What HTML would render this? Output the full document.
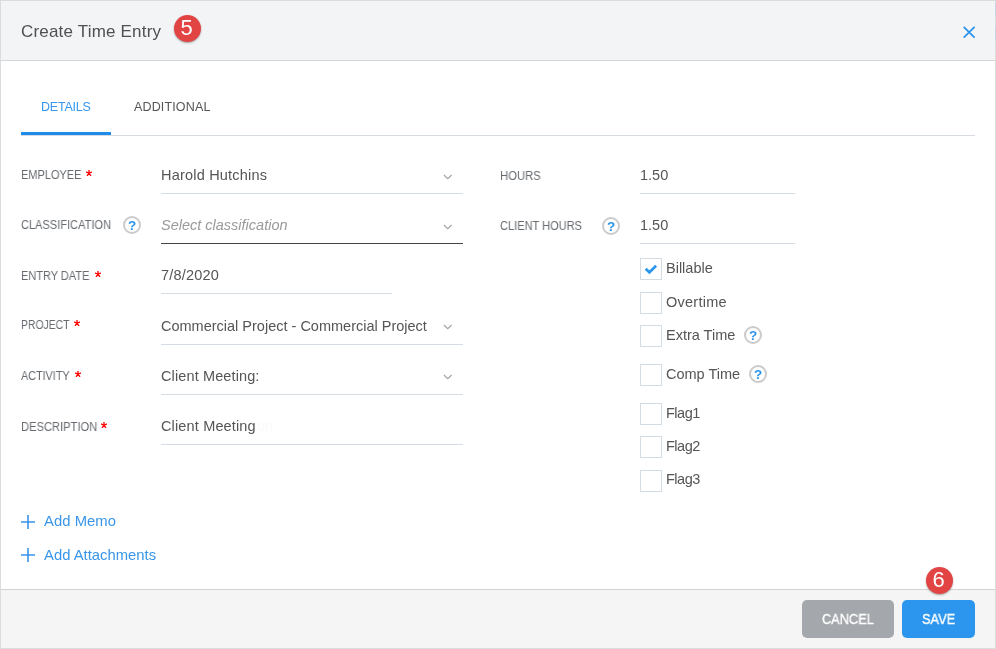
<!DOCTYPE html>
<html><head><meta charset="utf-8">
<style>
html,body{margin:0;padding:0;background:#fff;}
body{width:996px;height:649px;position:relative;overflow:hidden;font-family:"Liberation Sans",sans-serif;}
.a{position:absolute;}
.t{position:absolute;white-space:nowrap;line-height:20px;will-change:transform;}
.frame{left:0;top:0;width:994px;height:647px;border:1px solid #dcdcdc;background:#fff;}
.hdr{left:1px;top:1px;width:994px;height:59px;background:#f3f4f6;}
.hline{left:1px;top:60px;width:994px;height:1px;background:#d6d6d6;}
.ftr{left:1px;top:590px;width:994px;height:58px;background:#f5f5f5;}
.fline{left:1px;top:589px;width:994px;height:1px;background:#d3d3d3;}
.title{left:21px;top:22px;font-size:17px;color:#505050;letter-spacing:0.19px;}
.badge{width:27px;height:27px;border-radius:50%;background:#e24444;box-shadow:0 1px 2px rgba(0,0,0,.35);}
.badge span{position:absolute;left:-1px;top:0;width:27px;text-align:center;color:#fff;font-size:22px;line-height:26px;will-change:transform;}
.tab{font-size:12.5px;}
.lbl{font-size:12px;color:#676b70;transform-origin:0 0;}
.req{color:#e8141b;font-size:13px;}
.val{font-size:14.5px;color:#555;}
.ul{height:1px;background:#d5dce4;}
.chev{width:9px;height:6px;}
.cb{width:20px;height:20px;border:1px solid #d3dbe3;background:#fff;}
.cbl{font-size:14.5px;color:#555;}
.help{width:14px;height:14px;border:2px solid #cbcbcb;border-radius:50%;background:#fff;}
.help b{position:absolute;left:0;top:1px;width:14px;text-align:center;font-size:13.5px;line-height:14px;color:#2a93ec;font-weight:bold;will-change:transform;}
.link{font-size:14.8px;color:#3895e8;}
.btn{height:38px;border-radius:5px;}
.btn span{position:absolute;left:0;top:9px;white-space:nowrap;color:#fff;font-size:14px;line-height:20px;transform-origin:0 0;transform:scaleX(0.912);will-change:transform;-webkit-text-stroke:0.35px #fff;}
</style></head><body>
<div class="a frame"></div>
<div class="a hdr"></div>
<div class="a hline"></div>
<div class="a" style="left:995px;top:3px;width:1px;height:14px;background:#c9d5e2;"></div>
<div class="a" style="left:995px;top:27px;width:1px;height:14px;background:#c9d5e2;"></div>
<div class="t title">Create Time Entry</div>
<div class="a badge" style="left:173.5px;top:14.5px;"><span>5</span></div>
<svg class="a" style="left:962px;top:25px" width="14" height="14" viewBox="0 0 14 14"><path d="M2.2 2.3L12.1 12.1M12.1 2.3L2.2 12.1" stroke="#2a93ee" stroke-width="1.75" stroke-linecap="round"/></svg>

<!-- tabs -->
<div class="t tab" style="left:41px;top:97px;color:#3597ee;letter-spacing:-0.22px;">DETAILS</div>
<div class="t tab" style="left:134px;top:97px;color:#555;letter-spacing:0.15px;">ADDITIONAL</div>
<div class="a" style="left:21px;top:135px;width:954px;height:1px;background:#d5dbe1;"></div>
<div class="a" style="left:21px;top:132px;width:90px;height:3px;background:#1e8ceb;"></div>

<!-- left column -->
<div class="t lbl" style="left:21px;top:165px;transform:scaleX(0.915);">EMPLOYEE</div>
<div class="t val" style="left:161px;top:165px;letter-spacing:0.2px;">Harold Hutchins</div>
<div class="a ul" style="left:161px;top:193px;width:302px;"></div>

<div class="t lbl" style="left:21px;top:215px;transform:scaleX(0.92);">CLASSIFICATION</div>
<div class="t val" style="left:161px;top:215px;color:#9a9a9a;font-style:italic;">Select classification</div>
<div class="a" style="left:161px;top:243px;width:302px;height:1px;background:#444;"></div>

<div class="t lbl" style="left:21px;top:266px;transform:scaleX(0.915);">ENTRY DATE</div>
<div class="t val" style="left:161px;top:265px;letter-spacing:0.2px;">7/8/2020</div>
<div class="a ul" style="left:161px;top:293px;width:231px;"></div>

<div class="t lbl" style="left:21px;top:315px;transform:scaleX(0.865);">PROJECT</div>
<div class="t val" style="left:161px;top:316px;">Commercial Project - Commercial Project</div>
<div class="a ul" style="left:161px;top:344px;width:302px;"></div>

<div class="t lbl" style="left:21px;top:366px;transform:scaleX(0.9);">ACTIVITY</div>
<div class="t val" style="left:161px;top:366px;letter-spacing:0.12px;">Client Meeting:</div>
<div class="a ul" style="left:161px;top:394px;width:302px;"></div>

<div class="t lbl" style="left:21px;top:417px;transform:scaleX(0.93);">DESCRIPTION</div>
<div class="t val" style="left:161px;top:416px;letter-spacing:0.15px;">Client Meeting</div>
<div class="t val" style="left:257px;top:416px;color:#fafafa;">on</div>
<div class="a ul" style="left:161px;top:444px;width:302px;"></div>

<svg class="a" style="left:85.5px;top:169.5px" width="6" height="6" viewBox="0 0 6 6"><path d="M3 0.2V3M3 3L0.3 2.1M3 3L4.7 5.6M3 3L1.3 5.6M3 3L5.7 2.1" stroke="#f00" stroke-width="1.3" stroke-linecap="round"/></svg>
<svg class="a" style="left:95px;top:270.5px" width="6" height="6" viewBox="0 0 6 6"><path d="M3 0.2V3M3 3L0.3 2.1M3 3L4.7 5.6M3 3L1.3 5.6M3 3L5.7 2.1" stroke="#f00" stroke-width="1.3" stroke-linecap="round"/></svg>
<svg class="a" style="left:73.5px;top:319.5px" width="6" height="6" viewBox="0 0 6 6"><path d="M3 0.2V3M3 3L0.3 2.1M3 3L4.7 5.6M3 3L1.3 5.6M3 3L5.7 2.1" stroke="#f00" stroke-width="1.3" stroke-linecap="round"/></svg>
<svg class="a" style="left:74.5px;top:370.5px" width="6" height="6" viewBox="0 0 6 6"><path d="M3 0.2V3M3 3L0.3 2.1M3 3L4.7 5.6M3 3L1.3 5.6M3 3L5.7 2.1" stroke="#f00" stroke-width="1.3" stroke-linecap="round"/></svg>
<svg class="a" style="left:101px;top:421.5px" width="6" height="6" viewBox="0 0 6 6"><path d="M3 0.2V3M3 3L0.3 2.1M3 3L4.7 5.6M3 3L1.3 5.6M3 3L5.7 2.1" stroke="#f00" stroke-width="1.3" stroke-linecap="round"/></svg>
<!-- chevrons -->
<svg class="a" style="left:443px;top:174px" width="10" height="6" viewBox="0 0 10 6"><path d="M0.9 1L4.75 4.7L8.6 1" fill="none" stroke="#a3a3a3" stroke-width="1.15"/></svg>
<svg class="a" style="left:443px;top:224px" width="10" height="6" viewBox="0 0 10 6"><path d="M0.9 1L4.75 4.7L8.6 1" fill="none" stroke="#a3a3a3" stroke-width="1.15"/></svg>
<svg class="a" style="left:443px;top:324px" width="10" height="6" viewBox="0 0 10 6"><path d="M0.9 1L4.75 4.7L8.6 1" fill="none" stroke="#a3a3a3" stroke-width="1.15"/></svg>
<svg class="a" style="left:443px;top:374px" width="10" height="6" viewBox="0 0 10 6"><path d="M0.9 1L4.75 4.7L8.6 1" fill="none" stroke="#a3a3a3" stroke-width="1.15"/></svg>

<div class="a help" style="left:123px;top:216px;"><b>?</b></div>

<!-- right column -->
<div class="t lbl" style="left:500px;top:166px;transform:scaleX(0.94);">HOURS</div>
<div class="t val" style="left:640px;top:165px;">1.50</div>
<div class="a ul" style="left:640px;top:193px;width:155px;"></div>

<div class="t lbl" style="left:500px;top:216px;transform:scaleX(0.92);">CLIENT HOURS</div>
<div class="a help" style="left:602px;top:217px;"><b>?</b></div>
<div class="t val" style="left:640px;top:215px;">1.50</div>
<div class="a ul" style="left:640px;top:243px;width:155px;"></div>

<div class="a cb" style="left:640px;top:258px;"></div>
<svg class="a" style="left:640px;top:258px" width="22" height="22" viewBox="0 0 22 22"><path d="M5.7 10.7L9.4 14.3L16.1 7.7" fill="none" stroke="#2a96f0" stroke-width="2.7"/></svg>
<div class="t cbl" style="left:666px;top:258px;">Billable</div>
<div class="a cb" style="left:640px;top:292px;"></div>
<div class="t cbl" style="left:666px;top:292px;letter-spacing:0.25px;">Overtime</div>
<div class="a cb" style="left:640px;top:325px;"></div>
<div class="t cbl" style="left:666px;top:325px;">Extra Time</div>
<div class="a help" style="left:744px;top:326px;"><b>?</b></div>
<div class="a cb" style="left:640px;top:364px;"></div>
<div class="t cbl" style="left:666px;top:364px;">Comp Time</div>
<div class="a help" style="left:749px;top:365px;"><b>?</b></div>
<div class="a cb" style="left:640px;top:403px;"></div>
<div class="t cbl" style="left:666px;top:403px;letter-spacing:-0.5px;">Flag1</div>
<div class="a cb" style="left:640px;top:436px;"></div>
<div class="t cbl" style="left:666px;top:436px;letter-spacing:-0.5px;">Flag2</div>
<div class="a cb" style="left:640px;top:470px;"></div>
<div class="t cbl" style="left:666px;top:469px;letter-spacing:-0.5px;">Flag3</div>

<!-- links -->
<svg class="a" style="left:21px;top:515px" width="14" height="14" viewBox="0 0 14 14"><path d="M7 0V14M0 7H14" stroke="#3895e8" stroke-width="1.6"/></svg>
<div class="t link" style="left:44px;top:511px;letter-spacing:0.05px;">Add Memo</div>
<svg class="a" style="left:21px;top:548px" width="14" height="14" viewBox="0 0 14 14"><path d="M7 0V14M0 7H14" stroke="#3895e8" stroke-width="1.6"/></svg>
<div class="t link" style="left:44px;top:545px;letter-spacing:0.02px;">Add Attachments</div>

<!-- footer -->
<div class="a fline"></div>
<div class="a ftr"></div>
<div class="a btn" style="left:802px;top:600px;width:92px;background:#a4a7ab;"><span style="left:20px">CANCEL</span></div>
<div class="a btn" style="left:902px;top:600px;width:73px;background:#2c96ee;"><span style="left:20px">SAVE</span></div>
<div class="a badge" style="left:925.5px;top:567px;"><span>6</span></div>
</body></html>
